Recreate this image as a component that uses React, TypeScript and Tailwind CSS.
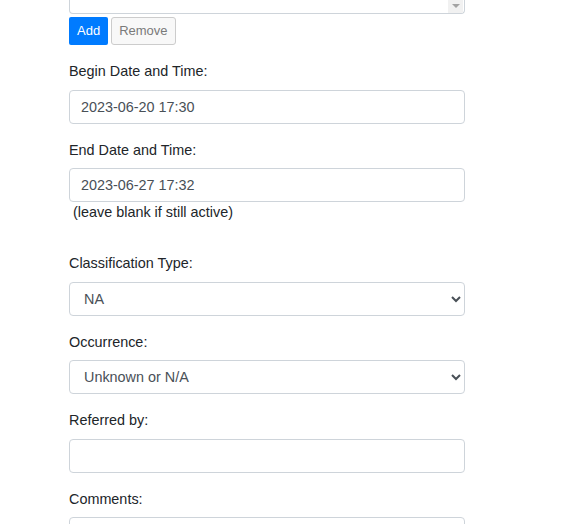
import React from 'react';

const font = { fontFamily: '"Liberation Sans", Arial, sans-serif' };

function Label({ children }: { children: React.ReactNode }) {
  return (
    <label className="block text-[14.4px] leading-[20.5px] text-[#212529] mb-2">
      {children}
    </label>
  );
}

function TextInput({ value }: { value?: string }) {
  return (
    <input
      type="text"
      defaultValue={value}
      className="block w-full h-[34px] pl-[11px] pr-3 text-[14.4px] text-[#495057] bg-white border border-[#ced4da] rounded-[4px] outline-none"
    />
  );
}

function SelectInput({ value, options }: { value: string; options: string[] }) {
  return (
    <select
      defaultValue={value}
      className="block w-full h-[34px] pl-[10px] pr-1 text-[14.4px] text-[#495057] bg-white border border-[#ced4da] rounded-[4px] outline-none"
    >
      {options.map((o) => (
        <option key={o}>{o}</option>
      ))}
    </select>
  );
}

export default function App() {
  return (
    <div className="min-h-screen bg-white" style={font}>
      <div className="ml-[69px] w-[396px]">
        {/* list box, scrolled so only its bottom edge shows */}
        <div className="flex h-[14px] border-x border-b border-[#ced4da] rounded-b-[4px] bg-white">
          <div className="flex-1" />
          <div className="w-[15px] mr-[1px] bg-[#f1f1f1] flex items-start justify-center pt-[4px]">
            <div className="w-0 h-0 border-x-[4px] border-x-transparent border-t-[4px] border-t-[#a3a3a3]" />
          </div>
        </div>

        <div className="flex gap-[3px] mt-[3px]">
          <button className="h-[28px] px-2 text-[13px] text-white bg-[#007bff] rounded-[2px]">
            Add
          </button>
          <button className="h-[28px] px-[7px] text-[13px] text-[#7a7a7a] bg-[#f8f8f8] border border-[#cccccc] rounded-[3px]">
            Remove
          </button>
        </div>

        <div className="mt-4 mb-4">
          <Label>Begin Date and Time:</Label>
          <TextInput value="2023-06-20 17:30" />
        </div>

        <div className="mb-[30px]">
          <Label>End Date and Time:</Label>
          <TextInput value="2023-06-27 17:32" />
          <div className="text-[14.4px] leading-[21px] text-[#212529]">&nbsp;(leave blank if still active)</div>
        </div>

        <div className="mb-4">
          <Label>Classification Type:</Label>
          <SelectInput value="NA" options={['NA', 'Type A', 'Type B']} />
        </div>

        <div className="mb-4">
          <Label>Occurrence:</Label>
          <SelectInput value="Unknown or N/A" options={['Unknown or N/A', 'First', 'Recurring']} />
        </div>

        <div className="mb-4">
          <Label>Referred by:</Label>
          <TextInput />
        </div>

        <div className="mb-4">
          <Label>Comments:</Label>
          <textarea className="block w-full h-[80px] px-3 py-1.5 text-[14.4px] text-[#495057] bg-white border border-[#ced4da] rounded-[4px] outline-none resize-none" />
        </div>
      </div>
    </div>
  );
}
